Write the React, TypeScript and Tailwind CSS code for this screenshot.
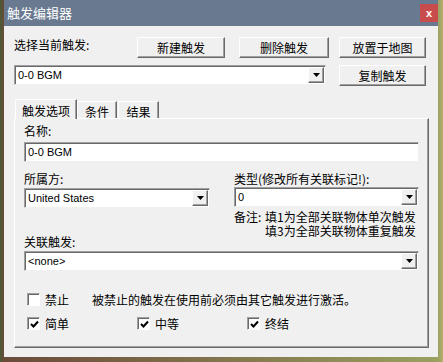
import React from "react";

const CJK = "font-['Noto_Sans_CJK_SC','Noto_Sans',sans-serif]";
const LAT = "font-['Liberation_Sans','Noto_Sans_CJK_SC',sans-serif]";

function Btn({ children, className = "" }: { children: React.ReactNode; className?: string }) {
  return (
    <div
      className={`h-[21px] flex items-center justify-center bg-[#f0f0f0] border border-t-white border-l-white border-r-[#696969] border-b-[#696969] shadow-[inset_-1px_-1px_0_#a0a0a0] text-[12px] text-black ${CJK} ${className}`}
    >
      {children}
    </div>
  );
}

function Arrow() {
  return (
    <div className="w-[16px] h-[16px] flex items-center justify-center bg-[#f0f0f0] border border-t-white border-l-white border-r-[#696969] border-b-[#696969] shadow-[inset_-1px_-1px_0_#a0a0a0]">
      <svg width="7" height="4" viewBox="0 0 7 4">
        <polygon points="0,0 7,0 3.5,4" fill="#000" />
      </svg>
    </div>
  );
}

function Field({ value, combo = false, className = "" }: { value: string; combo?: boolean; className?: string }) {
  return (
    <div
      className={`h-[20px] flex items-center bg-white border border-t-[#a0a0a0] border-l-[#a0a0a0] border-b-[#f0f0f0] border-r-[#f0f0f0] shadow-[inset_1px_1px_0_#696969] pl-[3px] pr-[1px] ${className}`}
    >
      <span className={`flex-1 text-[11px] leading-none text-black ${LAT}`}>{value}</span>
      {combo && <Arrow />}
    </div>
  );
}

function Check({ checked, label }: { checked: boolean; label: string }) {
  return (
    <div className="flex items-center">
      <div className="w-[13px] h-[13px] bg-white border border-t-[#a0a0a0] border-l-[#a0a0a0] border-b-white border-r-white shadow-[inset_1px_1px_0_#696969] flex items-center justify-center">
        {checked && (
          <svg width="9" height="9" viewBox="0 0 9 9" className="mt-[1px] ml-[1px]">
            <polyline points="1,4 3.5,6.5 8,1.5" fill="none" stroke="#000" strokeWidth="2" />
          </svg>
        )}
      </div>
      <span className={`ml-[5px] text-[12px] leading-none text-black ${CJK}`}>{label}</span>
    </div>
  );
}

function Tab({ label, active = false, className = "" }: { label: string; active?: boolean; className?: string }) {
  return (
    <div
      className={`flex items-start justify-center bg-[#f0f0f0] border-t border-l border-r border-t-white border-l-white border-r-[#696969] shadow-[inset_-1px_0_0_#a0a0a0] text-[12px] text-black ${CJK} ${
        active ? "h-[20px] pt-[2px] relative z-10 -mb-[1px]" : "h-[17px] pt-[1px]"
      } ${className}`}
    >
      {label}
    </div>
  );
}

export default function App() {
  return (
    <div className="w-[443px] h-[362px] overflow-hidden bg-[linear-gradient(90deg,#4a5a34_0px,#6b4a3a_4px,#9aa060_438px,#b4b070_443px)]">
      <div className="ml-[4px] w-[434px] h-[357px] bg-[#f0f0f0] flex flex-col">
        {/* title bar */}
        <div className="h-[26px] bg-[#687990] flex items-start shrink-0">
          <span className={`pl-[3px] pt-[5px] text-[13px] leading-[16px] text-white ${CJK}`}>触发编辑器</span>
          <div className={`ml-auto mt-[4px] w-[18px] h-[18px] bg-[#c94c4c] flex items-center justify-center text-white text-[11px] font-bold leading-none ${LAT}`}>
            x
          </div>
        </div>

        <div className="pl-[10px] pr-[12px] flex flex-col">
          {/* row 1 */}
          <div className="mt-[11px] flex items-start">
            <span className={`w-[123px] pt-[1px] text-[12px] leading-[14px] text-black ${CJK}`}>选择当前触发:</span>
            <Btn className="w-[88px]">新建触发</Btn>
            <Btn className="w-[90px] ml-[14px]">删除触发</Btn>
            <Btn className="w-[87px] ml-[10px]">放置于地图</Btn>
          </div>
          {/* row 2 */}
          <div className="mt-[7px] flex items-start">
            <Field value="0-0 BGM" combo className="w-[312px]" />
            <Btn className="w-[87px] ml-[13px]">复制触发</Btn>
          </div>

          {/* tabs */}
          <div className="mt-[13px] flex items-end pl-[1px] h-[19px]">
            <Tab label="触发选项" active className="w-[62px]" />
            <Tab label="条件" className="w-[40px]" />
            <Tab label="结果" className="w-[41px] ml-[1px]" />
          </div>

          {/* panel */}
          <div className="w-[415px] h-[230px] border border-t-white border-l-white border-r-[#696969] border-b-[#696969] shadow-[inset_-1px_-1px_0_#a0a0a0] px-[9px] flex flex-col">
            <span className={`mt-[5px] text-[12px] leading-[14px] text-black ${CJK}`}>名称:</span>
            <Field value="0-0 BGM" className="mt-[4px] w-[395px]" />

            <div className="mt-[10px] flex items-start">
              <div className="w-[186px] flex flex-col">
                <span className={`text-[12px] leading-[14px] text-black ${CJK}`}>所属方:</span>
                <Field value="United States" combo className="mt-[2px]" />
              </div>
              <div className="ml-[24px] w-[185px] flex flex-col">
                <span className={`text-[12px] leading-[14px] text-black ${CJK}`}>类型(修改所有关联标记!):</span>
                <Field value="0" combo className="mt-[1px]" />
                <div className={`mt-[3px] flex text-[12px] leading-[14px] text-black ${CJK}`}>
                  <span className="w-[31px]">备注:</span>
                  <p className="m-0">
                    填1为全部关联物体单次触发
                    <br />
                    填3为全部关联物体重复触发
                  </p>
                </div>
              </div>
            </div>

            <span className={`self-start -mt-[3px] text-[12px] leading-[14px] text-black ${CJK}`}>关联触发:</span>
            <Field value="<none>" combo className="mt-[2px] w-[395px]" />

            <div className="mt-[22px] flex items-center pl-[3px] h-[13px]">
              <div className="w-[65px]">
                <Check checked={false} label="禁止" />
              </div>
              <span className={`text-[12px] leading-none text-black ${CJK}`}>被禁止的触发在使用前必须由其它触发进行激活。</span>
            </div>
            <div className="mt-[11px] flex items-center pl-[3px] h-[13px]">
              <div className="w-[110px]">
                <Check checked label="简单" />
              </div>
              <div className="w-[110px]">
                <Check checked label="中等" />
              </div>
              <div>
                <Check checked label="终结" />
              </div>
            </div>
          </div>
        </div>
      </div>
    </div>
  );
}
